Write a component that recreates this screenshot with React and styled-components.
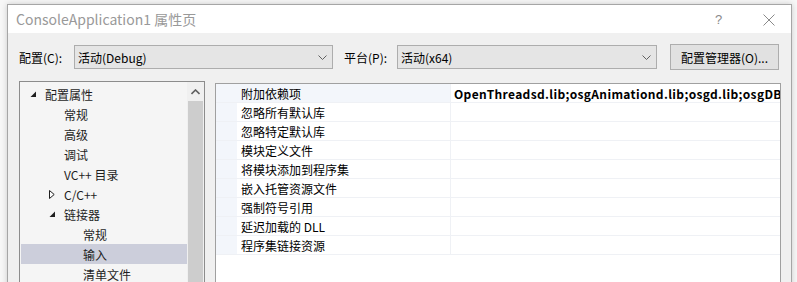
import React from "react"
import styled, { createGlobalStyle } from "styled-components"

const treeItems = [
  { text: "配置属性", level: 1, arrow: "open" },
  { text: "常规", level: 2 },
  { text: "高级", level: 2 },
  { text: "调试", level: 2 },
  { text: "VC++ 目录", level: 2 },
  { text: "C/C++", level: 2, arrow: "closed" },
  { text: "链接器", level: 2, arrow: "open" },
  { text: "常规", level: 3 },
  { text: "输入", level: 3, selected: true },
  { text: "清单文件", level: 3 },
]

const props = [
  { name: "附加依赖项", value: "OpenThreadsd.lib;osgAnimationd.lib;osgd.lib;osgDBd.lib;osgFXd.lib", active: true },
  { name: "忽略所有默认库" },
  { name: "忽略特定默认库" },
  { name: "模块定义文件" },
  { name: "将模块添加到程序集" },
  { name: "嵌入托管资源文件" },
  { name: "强制符号引用" },
  { name: "延迟加载的 DLL" },
  { name: "程序集链接资源" },
]

const Chevron = () => (
  <svg width="9" height="5" viewBox="0 0 9 5">
    <path d="M0.5 0.5 L4.5 4.5 L8.5 0.5" fill="none" stroke="#606060" strokeWidth="1" />
  </svg>
)

const Arrow = ({ kind }) =>
  kind === "open" ? (
    <svg width="7" height="7" viewBox="0 0 7 7">
      <path d="M6 0.5 L6 6 L0.5 6 Z" fill="#1e1e1e" />
    </svg>
  ) : (
    <svg width="6" height="9" viewBox="0 0 6 9">
      <path d="M0.5 0.5 L5.2 4.5 L0.5 8.5 Z" fill="#fff" stroke="#1e1e1e" strokeWidth="1" />
    </svg>
  )

const App = () => {
  return (
    <>
      <GlobalStyle />
      <Screen>
        <Window>
          <TitleBar>
            <Title>ConsoleApplication1 属性页</Title>
            <Help>?</Help>
            <CloseBtn>
              <svg width="12" height="12" viewBox="0 0 12 12">
                <path d="M0.5 0.5 L11.5 11.5 M11.5 0.5 L0.5 11.5" stroke="#8a8a8a" strokeWidth="1" />
              </svg>
            </CloseBtn>
          </TitleBar>
          <Body>
            <Toolbar>
              <FieldLabel $w={55}>配置(C):</FieldLabel>
              <Combo $w={259}>
                <span>活动(Debug)</span>
                <Chevron />
              </Combo>
              <FieldLabel $w={53} $ml={11}>平台(P):</FieldLabel>
              <Combo $w={260}>
                <span>活动(x64)</span>
                <Chevron />
              </Combo>
              <Button>配置管理器(O)...</Button>
            </Toolbar>
            <Panels>
              <Tree>
                <TreeList>
                  {treeItems.map((it, i) => (
                    <TreeRow key={i} $level={it.level} $selected={it.selected}>
                      <Toggle>{it.arrow && <Arrow kind={it.arrow} />}</Toggle>
                      <span>{it.text}</span>
                    </TreeRow>
                  ))}
                </TreeList>
                <ScrollBar>
                  <ScrollArrow>
                    <svg width="9" height="6" viewBox="0 0 9 6">
                      <path d="M0.5 5 L4.5 1 L8.5 5" fill="none" stroke="#606060" strokeWidth="1.6" />
                    </svg>
                  </ScrollArrow>
                  <Thumb />
                </ScrollBar>
              </Tree>
              <Grid>
                {props.map((p, i) => (
                  <PropRow key={i}>
                    <Margin />
                    <PropName $active={p.active}>{p.name}</PropName>
                    <PropValue>{p.value}</PropValue>
                  </PropRow>
                ))}
              </Grid>
            </Panels>
          </Body>
        </Window>
      </Screen>
    </>
  )
}

export default App

const GlobalStyle = createGlobalStyle`
  html, body {
    margin: 0;
    padding: 0;
    background: #f7f7f7;
    overflow: hidden;
  }
  body {
    font-family: "Noto Sans CJK SC", "Noto Sans", sans-serif;
    font-size: 12px;
    color: #1e1e1e;
  }
`

const Screen = styled.div`
  height: 282px;
  padding: 4px 0 0 7px;
  box-sizing: border-box;
  overflow: hidden;
`

const Window = styled.div`
  width: 785px;
  height: 320px;
  box-sizing: border-box;
  border: 1px solid #a6a6a6;
  background: #f0f0f0;
  box-shadow: 0 0 6px rgba(0, 0, 0, 0.18);
  display: flex;
  flex-direction: column;
`

const TitleBar = styled.div`
  height: 30px;
  background: #ffffff;
  display: flex;
  align-items: center;
  padding-left: 8px;
`

const Title = styled.div`
  flex: 1;
  font-size: 14px;
  color: #999999;
  padding-bottom: 1px;
`

const Help = styled.div`
  width: 14px;
  font-size: 13px;
  color: #8a8a8a;
  margin-right: 34px;
  font-family: "Liberation Sans", sans-serif;
`

const CloseBtn = styled.div`
  display: flex;
  margin-right: 16px;
  margin-top: 1px;
`

const Body = styled.div`
  flex: 1;
  padding: 11px 0 0 11px;
`

const Toolbar = styled.div`
  display: flex;
  align-items: center;
  height: 26px;
`

const FieldLabel = styled.div`
  width: ${(p) => p.$w}px;
  margin-left: ${(p) => p.$ml || 0}px;
  color: #000;
`

const Combo = styled.div`
  width: ${(p) => p.$w}px;
  height: 24px;
  box-sizing: border-box;
  border: 1px solid #adadad;
  background: #e5e5e5;
  display: flex;
  align-items: center;
  justify-content: space-between;
  padding: 0 5px 0 3px;
  color: #000;
`

const Button = styled.div`
  width: 109px;
  height: 26px;
  margin-left: 13px;
  box-sizing: border-box;
  border: 1px solid #adadad;
  background: #e1e1e1;
  display: flex;
  align-items: center;
  justify-content: center;
  color: #000;
`

const Panels = styled.div`
  display: flex;
  align-items: flex-start;
  margin-top: 11px;
`

const Tree = styled.div`
  width: 186px;
  height: 240px;
  box-sizing: border-box;
  border: 1px solid #8c8c8c;
  background: #f5f5f5;
  display: flex;
`

const TreeList = styled.div`
  flex: 1;
  padding: 2px 0 0 1px;
`

const TreeRow = styled.div`
  height: 20px;
  display: flex;
  align-items: center;
  padding-left: ${(p) => 4 + (p.$level - 1) * 19}px;
  background: ${(p) => (p.$selected ? "#cccedb" : "transparent")};
  color: #1e1e1e;
`

const Toggle = styled.div`
  width: 20px;
  display: flex;
  align-items: center;
  padding-left: 5px;
  box-sizing: border-box;
`

const ScrollBar = styled.div`
  width: 17px;
  background: #f0f0f0;
  display: flex;
  flex-direction: column;
`

const ScrollArrow = styled.div`
  height: 19px;
  display: flex;
  align-items: center;
  justify-content: center;
`

const Thumb = styled.div`
  flex: 1;
  margin: 0 1px;
  background: #cdcdcd;
`

const Grid = styled.div`
  width: 566px;
  height: 240px;
  margin-left: 10px;
  margin-top: 2px;
  box-sizing: border-box;
  border: 1px solid #a0a0a0;
  background: #ffffff;
`

const PropRow = styled.div`
  height: 19px;
  display: flex;
  box-sizing: border-box;
  border-bottom: 1px solid #eff1f5;
`

const Margin = styled.div`
  width: 21px;
  background: #f3f6fb;
`

const PropName = styled.div`
  width: 214px;
  box-sizing: border-box;
  padding-left: 4px;
  display: flex;
  align-items: center;
  background: ${(p) => (p.$active ? "#f3f6fb" : "#ffffff")};
  border-right: 1px solid #eff1f5;
  color: #000;
`

const PropValue = styled.div`
  flex: 1;
  padding-left: 3px;
  display: flex;
  align-items: center;
  white-space: nowrap;
  overflow: hidden;
  font-weight: bold;
  letter-spacing: 0.35px;
  color: #000;
`
